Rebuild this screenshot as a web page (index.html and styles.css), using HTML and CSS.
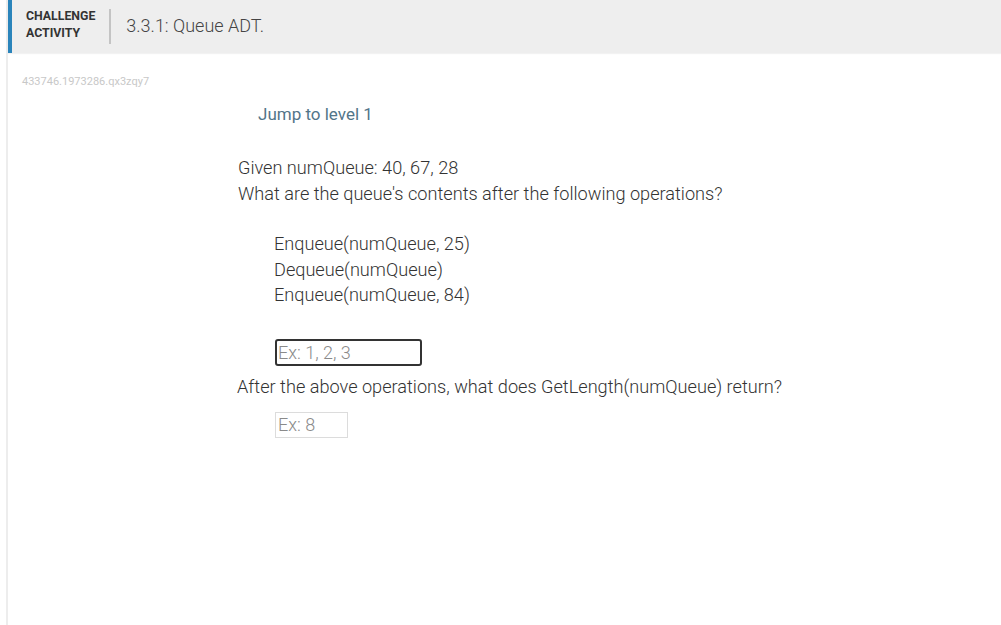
FILE: index.html
```html
<!DOCTYPE html>
<html lang="en">
<head>
  <meta charset="UTF-8">
  <title>3.3.1: Queue ADT.</title>
  <link rel="stylesheet" href="styles.css">
</head>
<body>
  <div class="page">
    <div class="card">
      <div class="activity-header">
        <div class="activity-label">
          <div class="label-text">CHALLENGE<br>ACTIVITY</div>
        </div>
        <div class="activity-title">3.3.1: Queue ADT.</div>
      </div>

      <div class="activity-id">433746.1973286.qx3zqy7</div>

      <div class="activity-body">
        <div class="jump-level">Jump to level 1</div>

        <div class="question">
          <p>Given numQueue: 40, 67, 28</p>
          <p>What are the queue's contents after the following operations?</p>
        </div>

        <div class="code-block">
          <div>Enqueue(numQueue, 25)</div>
          <div>Dequeue(numQueue)</div>
          <div>Enqueue(numQueue, 84)</div>
        </div>

        <input class="answer answer-wide" type="text" placeholder="Ex: 1, 2, 3">

        <p class="question-2">After the above operations, what does GetLength(numQueue) return?</p>

        <input class="answer answer-small" type="text" placeholder="Ex: 8">
      </div>
    </div>
  </div>
</body>
</html>
```

FILE: styles.css
```css
/* Reset */
* {
  margin: 0;
  padding: 0;
  box-sizing: border-box;
}

html, body {
  height: 100%;
  background: #fff;
  font-family: Roboto, 'Liberation Sans', Arial, sans-serif;
  color: #333;
  overflow: hidden;
}

/* Page wrapper */
.page {
  height: 100%;
  padding-left: 6px;
}

.card {
  height: 100%;
  border-left: 2px solid #ededed;
}

/* Header */
.activity-header {
  display: flex;
  align-items: center;
  height: 53px;
  background: #eeeeee;
  border-left: 4px solid #2a84bb;
  box-shadow: 0 1px 1px rgba(0, 0, 0, 0.05);
}

.activity-label {
  display: flex;
  align-items: center;
  height: 35px;
  padding: 0 14px 0 14px;
  border-right: 2px solid #c4c4c4;
}

.label-text {
  font-size: 12.3px;
  font-weight: 700;
  line-height: 17px;
  color: #333;
  margin-top: -4px;
}

.activity-title {
  font-size: 18px;
  font-weight: 300;
  color: #444;
  padding-left: 15px;
  margin-top: -3px;
}

.activity-id {
  font-size: 11px;
  color: #c8c8c8;
  padding: 22px 0 0 14px;
  line-height: 14px;
}

/* Body */
.activity-body {
  padding-left: 230px;
}

.jump-level {
  font-size: 17px;
  color: #527589;
  padding-left: 20px;
  margin-top: 13px;
  line-height: 24px;
}

.question {
  margin-top: 29px;
  font-size: 18.15px;
  font-weight: 300;
  line-height: 26px;
  color: #333;
}

.code-block {
  margin-top: 24px;
  padding-left: 36px;
  font-size: 18.15px;
  font-weight: 300;
  line-height: 25.5px;
  color: #333;
}

.answer {
  display: block;
  font-family: inherit;
  font-size: 18px;
  font-weight: 300;
  color: #333;
  background: #fff;
  outline: none;
  margin-left: 37px;
}

.answer::placeholder {
  color: #8a8a8a;
}

.answer-wide {
  width: 147px;
  height: 27px;
  margin-top: 31px;
  border: 2px solid #333;
  border-radius: 3px;
  padding: 0 1px;
}

.question-2 {
  font-size: 18.15px;
  font-weight: 300;
  line-height: 26px;
  margin-top: 8px;
  margin-left: -1px;
}

.answer-small {
  width: 73px;
  height: 26px;
  margin-top: 12px;
  border: 1px solid #dcdcdc;
  padding: 0 2px;
}
```
